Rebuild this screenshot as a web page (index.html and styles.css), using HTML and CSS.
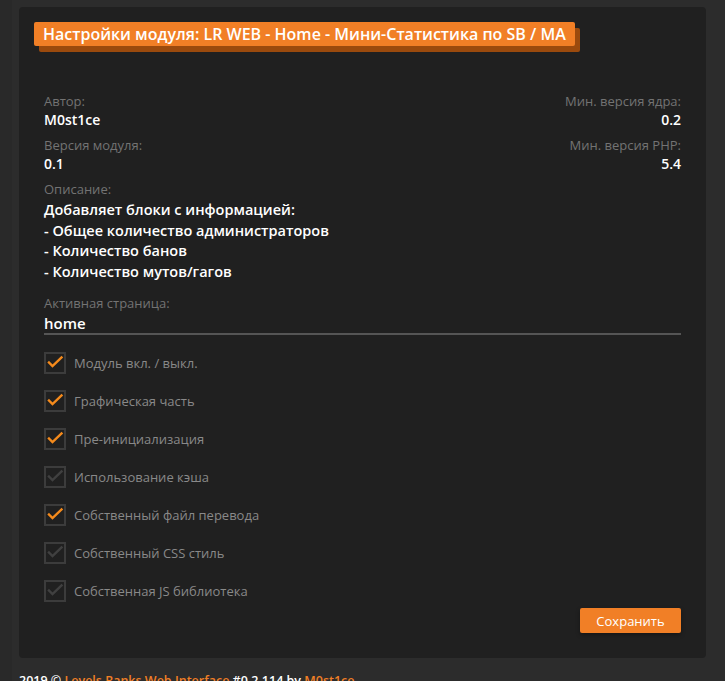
FILE: index.html
```html
<!DOCTYPE html>
<html lang="ru">
<head>
<meta charset="utf-8">
<title>Настройки модуля</title>
<link rel="stylesheet" href="styles.css">
</head>
<body>
<div class="page">
  <div class="strip"></div>
  <div class="main">
    <div class="card">
      <div class="title-wrap"><h1 class="title">Настройки модуля: LR WEB - Home - Мини-Статистика по SB / MA</h1></div>
      <div class="content">
        <div class="info-row">
          <div class="col">
            <div class="label">Автор:</div>
            <div class="value">M0st1ce</div>
          </div>
          <div class="col right">
            <div class="label">Мин. версия ядра:</div>
            <div class="value">0.2</div>
          </div>
        </div>
        <div class="info-row">
          <div class="col">
            <div class="label">Версия модуля:</div>
            <div class="value">0.1</div>
          </div>
          <div class="col right">
            <div class="label">Мин. версия PHP:</div>
            <div class="value">5.4</div>
          </div>
        </div>
        <div class="label">Описание:</div>
        <div class="desc">Добавляет блоки с информацией:<br>- Общее количество администраторов<br>- Количество банов<br>- Количество мутов/гагов</div>
        <div class="label label-page">Активная страница:</div>
        <div class="input">home</div>
        <ul class="checks">
          <li class="check on"><span class="box"><svg viewBox="0 0 22 22"><path d="M5 10.5 L8.5 14 L17.5 5.5"/></svg></span>Модуль вкл. / выкл.</li>
          <li class="check on"><span class="box"><svg viewBox="0 0 22 22"><path d="M5 10.5 L8.5 14 L17.5 5.5"/></svg></span>Графическая часть</li>
          <li class="check on"><span class="box"><svg viewBox="0 0 22 22"><path d="M5 10.5 L8.5 14 L17.5 5.5"/></svg></span>Пре-инициализация</li>
          <li class="check"><span class="box"><svg viewBox="0 0 22 22"><path d="M5 10.5 L8.5 14 L17.5 5.5"/></svg></span>Использование кэша</li>
          <li class="check on"><span class="box"><svg viewBox="0 0 22 22"><path d="M5 10.5 L8.5 14 L17.5 5.5"/></svg></span>Собственный файл перевода</li>
          <li class="check"><span class="box"><svg viewBox="0 0 22 22"><path d="M5 10.5 L8.5 14 L17.5 5.5"/></svg></span>Собственный CSS стиль</li>
          <li class="check"><span class="box"><svg viewBox="0 0 22 22"><path d="M5 10.5 L8.5 14 L17.5 5.5"/></svg></span>Собственная JS библиотека</li>
        </ul>
        <div class="actions"><button class="btn">Сохранить</button></div>
      </div>
    </div>
    <div class="footer">2019 © <span class="accent">Levels Ranks Web Interface</span> #0.2.114 by <span class="accent">M0st1ce</span></div>
  </div>
</div>
</body>
</html>
```
FILE: styles.css
```css
html, body {
  margin: 0;
  padding: 0;
  background: #2c2c2c;
  height: 100%;
  overflow: hidden;
}
body {
  font-family: "Open Sans", "Liberation Sans", sans-serif;
  color: #fff;
}
.page {
  display: flex;
  min-height: 100%;
}
.strip {
  width: 12px;
  flex: none;
  background: #292929;
}
.main {
  flex: none;
  width: 687px;
  padding: 7px 0 0 7px;
}
.card {
  background: #202020;
  border-radius: 4px;
  height: 651px;
  box-sizing: border-box;
  padding-top: 15px;
}
.title-wrap {
  padding-left: 15px;
}
.title {
  display: inline-block;
  margin: 0;
  background: #f17f26;
  color: #fff;
  font-family: "Open Sans", sans-serif;
  font-weight: 600;
  font-size: 16px;
  line-height: 24px;
  height: 24px;
  padding: 0 9px;
  border-radius: 2px;
  box-shadow: 5px 6px 0 #9b4a0d;
  white-space: nowrap;
}
.content {
  padding: 46px 25px 0 25px;
}
.info-row {
  display: flex;
  justify-content: space-between;
}
.col.right {
  text-align: right;
}
.label {
  color: #737373;
  font-size: 13px;
  line-height: 18px;
}
.value {
  color: #fff;
  font-weight: 600;
  font-size: 14px;
  line-height: 19px;
  margin-bottom: 7px;
}
.desc {
  color: #fff;
  font-weight: 600;
  font-size: 14.5px;
  line-height: 20.5px;
  margin-top: 2px;
}
.label-page {
  margin-top: 12px;
}
.input {
  font-weight: 600;
  font-size: 15px;
  line-height: 20px;
  padding-top: 1px;
  border-bottom: 2px solid #555;
  color: #fff;
}
.checks {
  list-style: none;
  margin: 17px 0 0 0;
  padding: 0;
  display: flex;
  flex-direction: column;
  gap: 16px;
}
.check {
  display: flex;
  align-items: center;
  gap: 8px;
  color: #898989;
  font-size: 13px;
  line-height: 22px;
}
.box {
  width: 22px;
  height: 22px;
  box-sizing: border-box;
  border: 2px solid #3c3c3c;
  display: block;
  position: relative;
}
.box svg {
  position: absolute;
  left: -2px;
  top: -2px;
  width: 22px;
  height: 22px;
  fill: none;
  stroke: #404040;
  stroke-width: 2.4;
  stroke-linecap: square;
}
.check.on .box svg {
  stroke: #f48a1c;
}
.actions {
  display: flex;
  justify-content: flex-end;
  margin-top: 6px;
}
.btn {
  background: #f17f26;
  color: #fff;
  border: none;
  border-radius: 2px;
  font-family: "Open Sans", sans-serif;
  font-size: 13px;
  width: 101px;
  height: 25px;
  padding: 0;
  box-shadow: 0 2px 4px rgba(0,0,0,0.35);
}
.footer {
  margin-top: 14px;
  font-size: 12.5px;
  line-height: 18px;
  font-weight: 600;
  color: #fff;
  white-space: nowrap;
}
.accent {
  color: #f17f26;
}
```
